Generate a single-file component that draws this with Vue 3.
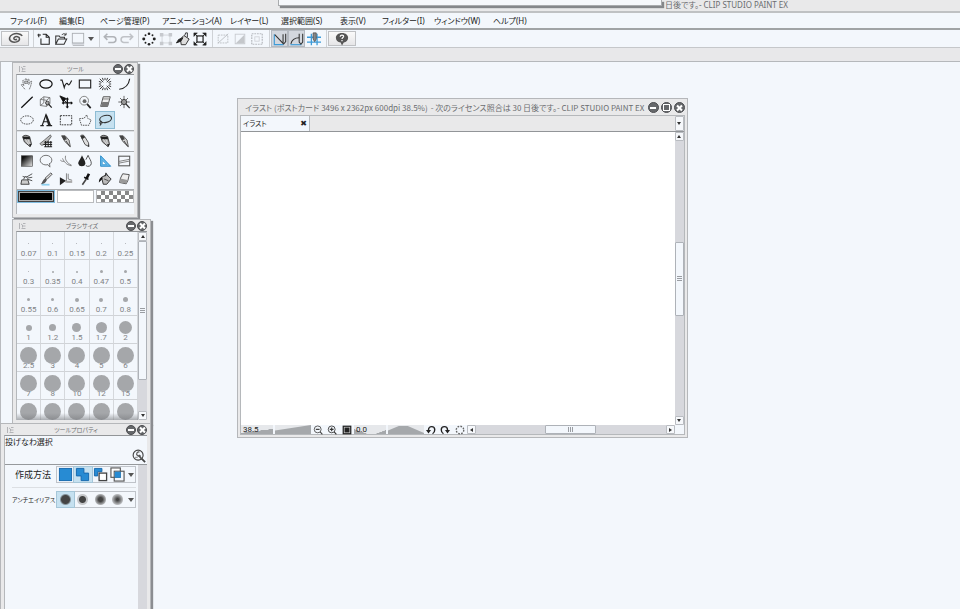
<script setup>
const menus = [
  'ファイル(F)', '編集(E)', 'ページ管理(P)', 'アニメーション(A)', 'レイヤー(L)',
  '選択範囲(S)', '表示(V)', 'フィルター(I)', 'ウィンドウ(W)', 'ヘルプ(H)',
]

const icons = {
  spiral: '<path d="M9.500 8.800c-2 1.200-4.300-.3-2.800-1.900 1.800-1.700 5.800-1 5.600 1.700-.2 3-5.300 4.200-8.600 2.600C.3 9.500 1.200 5.300 5 3.600c3.600-1.500 8.300-1 10.200 1.600" stroke="#555" stroke-width="1.600"/>',
  newDoc: '<path d="M2 2v4M0.500 3.500h4M6.500 2.500h4l3.500 3.500v8H4.500V7.500M10.500 2.500v3.500h3.500" stroke="#222" stroke-width="1.200"/>',
  open: '<path d="M2 14V4.500h4l1 1.500h5v2M2 14h9.500l3-6H5z" stroke="#333" stroke-width="1.200"/><path d="M9 3.500c1-2 3-2 4.500-.5M13.800 1v2.500h-2.500" stroke="#333"/>',
  save: '<rect x="1.500" y="1.500" width="13" height="11" stroke="#a9acb1"/><path d="M1 13.500h14M2 15.500h13" stroke="#bbbec3" stroke-width="1.400"/>',
  undo: '<path d="M1.500 5.500h10a3 3 0 0 1 0 6.500H6M5 2l-3.500 3.500L5 9" stroke="#b0b3b8" stroke-width="1.800"/>',
  redo: '<path d="M14.500 5.500h-10a3 3 0 0 0 0 6.500H10M11 2l3.500 3.500L11 9" stroke="#bfc2c7" stroke-width="1.800"/>',
  burst: '<g fill="#222"><circle cx="8" cy="2" r="1.500"/><circle cx="8" cy="14" r="1.500"/><circle cx="2" cy="8" r="1.700"/><circle cx="14" cy="8" r="1.700"/><circle cx="4" cy="3.800" r="1.100"/><circle cx="12" cy="3.800" r="1.100"/><circle cx="4" cy="12.200" r="1.100"/><circle cx="12" cy="12.200" r="1.100"/></g>',
  frameGrey: '<rect x="3.500" y="3.500" width="9" height="9" stroke="#cfd2d7"/><g fill="#c6c9ce"><path d="M1 1h4v4H1zM11 1h4v4h-4zM1 11h4v4H1zM11 11h4v4h-4z"/></g>',
  fill: '<path d="M5 8l4-4 6 4-4 6.500H6z" fill="#ddd" stroke="#222"/><path d="M10 4l1-3 2 0 0 5" stroke="#222"/><path d="M8 6.500l-5 2-2.500 4 5-2z" fill="#222" stroke="#222"/>',
  frame: '<rect x="4.500" y="4.500" width="7" height="7" stroke="#222" stroke-width="1.400"/><path d="M5 5L1.500 1.500M11 5l3.500-3.500M5 11l-3.500 3.500M11 11l3.500 3.500" stroke="#222"/><path d="M1 1h4L1 5zM15 1h-4l4 4zM1 15h4l-4-4zM15 15h-4l4-4z" fill="#222" stroke="#222" stroke-width=".6"/>',
  deselect: '<rect x="2.500" y="3.500" width="11" height="9" stroke="#b8bbc0" stroke-dasharray="2 1"/><path d="M2 13L14 2" stroke="#b8bbc0"/>',
  invert: '<rect x="2.500" y="2.500" width="11" height="11" stroke="#c6c9ce"/><path d="M3 13L13 3v10z" fill="#c4c7cb"/>',
  border: '<rect x="2" y="2" width="12" height="12" stroke="#b8bbc0" stroke-width="1.400" stroke-dasharray="2 1"/><rect x="5.500" y="5.500" width="5" height="5" stroke="#d0d3d8"/>',
  snapA: '<path d="M1.500 2.500v12H12" stroke="#3d9bd8" stroke-width="1.300"/><path d="M2 3l9.500 10V2.500M14.500 2v9l-2.500 3" stroke="#333" stroke-width="1.200"/>',
  snapB: '<path d="M.5 14.500H13" stroke="#3d9bd8" stroke-width="1.300"/><path d="M1 13.500C2 9 5 6.500 10.500 6.500" stroke="#333" stroke-width="1.200"/><path d="M10.500 2v9.500l2 2.500 2-2.500V2" stroke="#333" stroke-width="1.200"/>',
  snapC: '<path d="M5 2v13M11.500 2v13M0 6h16M0 11.500h16" stroke="#3d9bd8" stroke-width="1.500"/><path d="M7 1h3.500v7l-1.700 3L7 8z" fill="#888" stroke="#555"/>',
  help: '<path d="M8 1c4.500 0 7 2.500 7 5.500s-2.200 5-5 5.500l-2 3.500L6.500 12C3 11.500 1 9.500 1 6.500S3.500 1 8 1z" fill="#555"/><path d="M6 5.300c0-2.500 4.200-2.300 3.800 0-.2 1-1.800 1.200-1.800 2.700M8 9v1.500" stroke="#fff" stroke-width="1.400"/>',
  hand: '<path d="M5.500 14c-1-2-3-3-4-5 0-1 1.500-1 3 1L3 4.500c0-1 1.200-1 1.500 0L6 8 6 2.500c0-1 1.400-1 1.500 0L8 8l1-5c.2-1 1.400-.8 1.300.2L10 8.500l2-3.500c.600-.8 1.700-.2 1.300.700L12 11l-1.500 3.500" stroke="#555" stroke-dasharray="2 .6" stroke-width=".9"/>',
  ellipse: '<ellipse cx="8" cy="8" rx="7" ry="4.700" stroke="#111" stroke-width="1.400"/>',
  polyline: '<path d="M1.500 3.500h2L6 12c1-4 3-6 4-4s2 1 4.500-4" stroke="#222" stroke-width="1.300"/>',
  rect: '<rect x="1.500" y="3.500" width="13" height="9" stroke="#222" stroke-width="1.300"/>',
  rays: '<path d="M2 2l4 4M14 2l-4 4M2 14l4-4M14 14l-4-4M8 1v2.500M8 12.500V15M1 8h2.500M12.500 8H15M5 1l1.200 3M11 1L9.800 4M5 15l1.200-3M11 15l-1.200-3M1 5l3 1.200M1 11l3-1.200M15 5l-3 1.200M15 11l-3-1.200" stroke="#222" stroke-width="1"/>',
  curve: '<path d="M14.500 2c-1 7-4 11-12 12" stroke="#222" stroke-width="1.300"/>',
  line: '<path d="M1.500 14.500L14.500 2" stroke="#111" stroke-width="1.400"/>',
  cube: '<path d="M1.500 5l4-3 7 1v7l-4 3-7-1zM1.500 5l7 1 4-3M8.500 6v7M1.500 12l4-3V2" stroke="#666" stroke-width=".9"/><circle cx="9.500" cy="9" r="2" fill="#aaa" stroke="#333"/><path d="M11 10.500l3.500 4" stroke="#222" stroke-width="1.500"/>',
  move: '<path d="M1 1l7 3-3 4zM5 5l4 4" fill="#111" stroke="#111"/><path d="M9.500 4v10M4.500 9h10" stroke="#111" stroke-width="1.500"/><path d="M9.500 2.500L7.500 5h4zM9.500 15.500l-2-2.500h4zM3 9l2.500-2v4zM16 9l-2.500-2v4z" fill="#111"/>',
  zoom: '<circle cx="7" cy="6.500" r="5" stroke="#777"/><circle cx="7.500" cy="7" r="2.200" fill="#666"/><path d="M10.500 10.500l4 4.500" stroke="#222" stroke-width="2"/>',
  eraser: '<path d="M6 2h8l-3 11H3z" fill="#eee" stroke="#444"/><path d="M5 8h7.500L11 13H3.500z" fill="#777"/><path d="M5.500 4.500h7" stroke="#777"/>',
  star: '<path d="M8 1v14M1.500 8h13M3.500 3.500l9 9M12.500 3.500l-9 9" stroke="#555"/><circle cx="8" cy="8" r="3" fill="#999" stroke="#333"/><path d="M10 10l4.500 5" stroke="#333" stroke-width="1.400"/>',
  marqueeEllipse: '<ellipse cx="8" cy="8" rx="7.200" ry="4.700" stroke="#333" stroke-dasharray="1.800 1"/>',
  text: '<path d="M1.500 14.500h4M8.500 14.500h6.500M3.500 14.500L8 2 12.500 14.500M5 10h6" stroke="#222" stroke-width="1.300"/><path d="M7 2h2l5 12.500h-3.500z" fill="#222"/>',
  marqueeRect: '<rect x="1.500" y="3" width="13" height="10.500" stroke="#222" stroke-dasharray="2 1"/>',
  marqueePoly: '<path d="M1.500 6.500l5.500-.5 3-4 1 4 4 2-2.500 6H4z" stroke="#444" stroke-dasharray="1.800 1"/>',
  lasso: '<ellipse cx="8.700" cy="6.800" rx="6.800" ry="4" transform="rotate(-12 8.700 6.800)" stroke="#333" stroke-width="1.300"/><path d="M4 9.500c-3 0-2.500 3.500 0 3 1.500-.5.500-3-.5-2.500l-1 4.500" stroke="#333" stroke-width="1.100"/>',
  pencil: '<path d="M3 3c2-2 5-2 8 0l2 8-1.500 3.500L5 9z" fill="#aaa" stroke="#333"/><path d="M3 3l8 0 .5 3L4 6zM10 12l3.500-1-1.500 3.500z" fill="#222"/><path d="M6 6l4 6M9 6l2 5" stroke="#eee" stroke-width=".8"/>',
  brushGrid: '<path d="M13 1L6 7l-5 4 2 2 5-2 6-8z" fill="#bbb" stroke="#444" stroke-width=".8"/><path d="M6 9.500h9M5 12h10M6 14.500h9M7.500 8v7M10.500 8v7M13.500 8v7" stroke="#222" stroke-width="1.200"/>',
  pen: '<path d="M3 2l4 0 4.500 5 1.500 7.500L7 9z" fill="#ccc" stroke="#555"/><path d="M3 2l4 .3L9 6 5.500 7z" fill="#444"/><path d="M8 8l4.500 6.500" stroke="#333"/>',
  thinPencil: '<path d="M3 2c1-1 3-1 4 0l5 8 .5 4.500L8 12z" fill="#ddd" stroke="#444"/><path d="M3 2l3-.5L8 4 4.500 6zM11 13l1.500-1.500 0 3z" fill="#333"/>',
  gradient: '<rect x="1.500" y="2" width="13" height="12" fill="url(#toolGradient)" stroke="#444" stroke-width=".7"/>',
  balloon: '<ellipse cx="8" cy="7" rx="6.700" ry="5.500" stroke="#666"/><path d="M10 12l2.500 3-.5-4.500" fill="#f3f7fc" stroke="#666"/>',
  flow: '<path d="M4 5c2 4 4 7 10 8.500M7.500 2c-1 4 1 8 7 11M1.500 7c1 1 2 1.500 4 1.500" stroke="#777"/>',
  drops: '<path d="M4.500 1.500c2 4 4 6.500 4 9.500a4.200 3.700 0 0 1-8.200 0C.3 8 3 6 4.500 1.500z" fill="#222"/><path d="M11.500 1.500c1.500 4 3.700 6 3.700 9.300a3.700 3.500 0 0 1-6.200 2.400M11.500 1.500L9 6.500" stroke="#444"/>',
  setSquare: '<path d="M3 2v12h11.500z" fill="#65b9ea" stroke="#1b84c4"/><path d="M5 7.500v4.500h4.500z" fill="#fff" stroke="#1b84c4" stroke-width=".6"/>',
  frames: '<rect x="2" y="2.500" width="12.500" height="11" stroke="#555" stroke-width="1.200"/><path d="M2 8.500l12.500-2.500M2 10.500l12.500-2.500" stroke="#777"/>',
  airbrush: '<path d="M2 9h7l1.500 5H1z" fill="#ccc" stroke="#333"/><path d="M4 8.500L6 5l2 1M7 6l7-4M8 7l6-1M8 8l6 2M3 5l3 1" stroke="#444"/>',
  brush: '<path d="M13.500 1l1.500 1.500-6 6-2-1.500z" fill="#ddd" stroke="#444"/><path d="M7 7l2 2c-1 3-4 5-7 5 2-2 2-5 5-7z" fill="#555"/><path d="M3 14.500h9" stroke="#8dd0ef" stroke-width="2"/>',
  ink: '<path d="M1 6l7 4-7 5z" fill="#222"/><path d="M8.500 1.500v10h6.500M10.500 2v6l4.500 1.500" stroke="#777"/><path d="M7 10h8v2H7z" fill="#aaa"/>',
  dropper: '<path d="M12.500 2L9.500 8" stroke="#111" stroke-width="3"/><path d="M7 6l5 2.500" stroke="#111" stroke-width="1.600"/><path d="M9.500 8L5 14.500" stroke="#444" stroke-width="1.800"/>',
  bucket: '<path d="M4 6l6-3 5 5-5 6H6z" fill="#bbb" stroke="#222"/><path d="M8 5l1-4 2 3" stroke="#222"/><path d="M5 6c-3 0-4 3-4 6l4-4z" fill="#111"/><path d="M7 8l5 2" stroke="#444"/>',
  scrubber: '<path d="M6.500 2l7.500 1-1.500 6.500-2 4L3 12l1-5z" fill="#eee" stroke="#444"/><path d="M4 7.500l8 1.500-1.500 4L3.500 12z" fill="#999"/>',
  magnifier: '<circle cx="7" cy="7" r="5.700" stroke="#444" stroke-width="1.300"/><path d="M11 11l4 4" stroke="#444" stroke-width="2"/><path d="M8.500 3.500a2.300 2.300 0 1 0 1 3.500" stroke="#555" stroke-width="1.400"/><path d="M7.500 7l4 5" stroke="#555" stroke-width="2"/><path d="M3.500 9.500h3" stroke="#777"/>',
  selNew: '<rect x="1.500" y="1.500" width="13" height="13" fill="#278bd3" stroke="#1468ad"/>',
  selAdd: '<path d="M1.500 1.500h8v5h5v8h-8v-5h-5z" fill="#278bd3" stroke="#1468ad"/>',
  selSub: '<path d="M1.500 1.500h8v3.500h-4.500v4.500h-3.500z" fill="#278bd3" stroke="#1468ad"/><rect x="6.500" y="6.500" width="8" height="8" fill="#fff" stroke="#444" stroke-width="1.400"/>',
  selAnd: '<rect x="1" y="1" width="10" height="10" fill="#fff" stroke="#555" stroke-width="1.200"/><rect x="4.500" y="4.500" width="10.500" height="10.500" stroke="#555" stroke-width="1.200"/><rect x="5" y="5" width="6.500" height="6.500" fill="#278bd3"/>',
  zoomOut: '<circle cx="7.500" cy="7" r="5.500" stroke="#555" stroke-width="1.500"/><path d="M4.500 7h6M11.500 11l3.500 4" stroke="#444" stroke-width="1.800"/>',
  zoomIn: '<circle cx="7.500" cy="7" r="5.500" stroke="#444" stroke-width="1.500"/><path d="M4.500 7h6M7.500 4v6M11.500 11l3.500 4" stroke="#333" stroke-width="1.800"/>',
  fit: '<rect x="1" y="1" width="14" height="14" fill="#222"/><rect x="3.500" y="3.500" width="9" height="9" stroke="#ddd"/>',
  rotateLeft: '<path d="M4 10V7.500a5 5 0 0 1 10 0c0 3-1 5-3.500 6.500" stroke="#222" stroke-width="2.200"/><path d="M0 8h8l-4 5.500z" fill="#222"/>',
  rotateRight: '<path d="M12 10V7.500a5 5 0 0 0-10 0c0 3 1 5 3.500 6.500" stroke="#222" stroke-width="2.200"/><path d="M8 8h8l-4 5.500z" fill="#222"/>',
  reset: '<circle cx="8" cy="8" r="6" stroke="#666" stroke-width="2.200" stroke-dasharray="2.700 2"/>',
  list: '<path d="M3 2v12M6 4l3 2v5M10 3h5M10 8h5M7 13h8" stroke="#a0a2a6" stroke-width="1.500"/>',
}

const toolbar = [
  [['newDoc', '新規'], ['open', '開く'], ['save', '保存'], ['caret', '保存メニュー']],
  [['undo', '取り消し'], ['redo', 'やり直し']],
  [['burst', '消去'], ['frameGrey', '選択範囲外を消去'], ['fill', '塗りつぶし'], ['frame', '拡大・縮小・回転']],
  [['deselect', '選択を解除'], ['invert', '選択範囲を反転'], ['border', '境界線']],
  [['snapA', '定規にスナップ', true], ['snapB', '特殊定規にスナップ', true], ['snapC', 'グリッドにスナップ']],
]

const toolSections = [
  ['hand', 'ellipse', 'polyline', 'rect', 'rays', 'curve', 'line', 'cube', 'move', 'zoom', 'eraser', 'star',
    'marqueeEllipse', 'text', 'marqueeRect', 'marqueePoly', 'lasso'],
  ['pencil', 'brushGrid', 'pen', 'thinPencil', 'pencil', 'pen'],
  ['gradient', 'balloon', 'flow', 'drops', 'setSquare', 'frames', 'airbrush', 'brush', 'ink', 'dropper', 'bucket', 'scrubber'],
]

const brushes = [
  ['0.07', 1], ['0.1', 1], ['0.15', 1], ['0.2', 1], ['0.25', 1],
  ['0.3', 1], ['0.35', 2], ['0.4', 2], ['0.47', 3], ['0.5', 3],
  ['0.55', 3], ['0.6', 3], ['0.65', 4], ['0.7', 4], ['0.8', 5],
  ['1', 6], ['1.2', 7], ['1.5', 9], ['1.7', 11], ['2', 13],
  ['2.5', 17], ['3', 17], ['4', 17], ['5', 17], ['6', 17],
  ['7', 17], ['8', 17], ['10', 17], ['12', 17], ['15', 17],
  ['', 17], ['', 17], ['', 17], ['', 17], ['', 17],
]

const methods = [['selNew', '新規選択'], ['selAdd', '追加選択'], ['selSub', '部分解除'], ['selAnd', '選択中を選択']]
const smoothing = ['無し', '弱', '中', '強']
</script>

<template>
  <div class="app">
    <svg class="defs" aria-hidden="true">
      <defs>
        <linearGradient id="toolGradient" x1="0" y1="0" x2="1" y2="1">
          <stop offset="0.2" stop-color="#111" />
          <stop offset="1" stop-color="#eee" />
        </linearGradient>
      </defs>
    </svg>

    <header class="titlebar">日後です。- CLIP STUDIO PAINT EX</header>
    <div class="popup"></div>

    <nav class="menubar">
      <button v-for="m in menus" :key="m" type="button">{{ m }}</button>
    </nav>

    <div class="toolbar">
      <button class="raised" type="button" aria-label="CLIP STUDIO">
        <svg class="i15" viewBox="0 0 16 16" v-html="icons.spiral" />
      </button>
      <div v-for="(g, gi) in toolbar" :key="gi" class="group">
        <button
          v-for="[icon, label, on] in g" :key="icon" type="button"
          :class="{ on, narrow: icon === 'caret' }" :aria-label="label"
        >
          <span v-if="icon === 'caret'" class="caret"></span>
          <svg v-else class="i14" viewBox="0 0 16 16" v-html="icons[icon]" />
        </button>
      </div>
      <div class="group last">
        <button class="raised" type="button" aria-label="ヘルプ">
          <svg class="i14" viewBox="0 0 16 16" v-html="icons.help" />
        </button>
      </div>
    </div>
    <div class="band"></div>

    <main class="desk">
      <section class="panel tools">
        <header class="head">
          <svg class="i8" viewBox="0 0 16 16" v-html="icons.list" />
          <h2>ツール</h2>
          <button class="round min" type="button" aria-label="最小化"></button>
          <button class="round close" type="button" aria-label="閉じる"></button>
        </header>
        <div class="well">
          <div v-for="(s, si) in toolSections" :key="si" class="toolgrid">
            <button
              v-for="(t, ti) in s" :key="ti" type="button" :aria-label="t"
              :class="{ selected: t === 'lasso' }"
            >
              <svg class="i14" viewBox="0 0 16 16" v-html="icons[t]" />
            </button>
          </div>
          <div class="swatches">
            <button class="main" type="button" aria-label="メインカラー"></button>
            <button class="sub" type="button" aria-label="サブカラー"></button>
            <button class="clear" type="button" aria-label="透明色"></button>
          </div>
        </div>
      </section>

      <section class="panel sizes">
        <header class="head">
          <svg class="i8" viewBox="0 0 16 16" v-html="icons.list" />
          <h2>ブラシサイズ</h2>
          <button class="round min" type="button" aria-label="最小化"></button>
          <button class="round close" type="button" aria-label="閉じる"></button>
        </header>
        <div class="well sizewell">
          <div class="sizegrid">
            <button v-for="([label, d], i) in brushes" :key="i" type="button">
              <span class="dotbox"><span class="dot" :style="{ width: d + 'px', height: d + 'px' }"></span></span>
              <span v-if="label" class="num">{{ label }}</span>
            </button>
          </div>
          <div class="vbar">
            <button class="arrow up" type="button" aria-label="上へ"></button>
            <div class="thumb"><i></i></div>
            <div class="rest"></div>
            <button class="arrow down" type="button" aria-label="下へ"></button>
          </div>
        </div>
      </section>

      <section class="panel props">
        <header class="head">
          <svg class="i8" viewBox="0 0 16 16" v-html="icons.list" />
          <h2>ツールプロパティ</h2>
          <button class="round min" type="button" aria-label="最小化"></button>
          <button class="round close" type="button" aria-label="閉じる"></button>
        </header>
        <div class="well propwell">
          <div class="subtool">
            <span>投げなわ選択</span>
            <button type="button" aria-label="サブツール詳細">
              <svg class="i14" viewBox="0 0 16 16" v-html="icons.magnifier" />
            </button>
          </div>
          <div class="propbody">
            <div class="rows">
              <div class="row">
                <span id="method" class="name">作成方法</span>
                <div class="choice" role="group" aria-labelledby="method">
                  <button
                    v-for="([icon, label], i) in methods" :key="icon" type="button"
                    :aria-label="label" :class="{ picked: i === 1 }"
                  >
                    <svg class="i15" viewBox="0 0 16 16" v-html="icons[icon]" />
                  </button>
                  <button class="drop" type="button" aria-label="作成方法の一覧"><span class="caret"></span></button>
                </div>
              </div>
              <div class="row">
                <span id="aa" class="long">アンチエイリアス</span>
                <div class="choice" role="group" aria-labelledby="aa">
                  <button
                    v-for="(label, i) in smoothing" :key="label" type="button"
                    :aria-label="label" :class="{ picked: i === 0 }"
                  >
                    <span class="soft" :class="'s' + i"></span>
                  </button>
                  <button class="drop" type="button" aria-label="アンチエイリアスの一覧"><span class="caret"></span></button>
                </div>
              </div>
            </div>
            <div class="gutter"></div>
          </div>
        </div>
      </section>

      <section class="doc">
        <header class="dochead">
          <h1>イラスト (ポストカード 3496 x 2362px 600dpi 38.5%)<span>- 次のライセンス照合は 30 日後です。- CLIP STUDIO PAINT EX</span></h1>
          <button class="round min" type="button" aria-label="最小化"></button>
          <button class="round max" type="button" aria-label="最大化"></button>
          <button class="round close" type="button" aria-label="閉じる"></button>
        </header>
        <div class="docbody">
          <div class="tabs">
            <div class="tab">
              <span>イラスト</span>
              <button type="button" aria-label="タブを閉じる">✖</button>
            </div>
            <button class="arrow down tabmenu" type="button" aria-label="タブ一覧"></button>
          </div>
          <div class="view">
            <div class="canvas"></div>
            <div class="vbar">
              <button class="arrow up" type="button" aria-label="上へ"></button>
              <div class="rest"></div>
              <div class="thumb"><i></i></div>
              <div class="rest"></div>
              <button class="arrow down" type="button" aria-label="下へ"></button>
            </div>
          </div>
          <div class="status">
            <input class="field ramp-a" type="text" value="38.5" aria-label="表示倍率">
            <button class="slope ramp-b" type="button" aria-label="倍率を調整"><span></span></button>
            <div class="sicons">
              <button type="button" aria-label="縮小"><svg class="i10" viewBox="0 0 16 16" v-html="icons.zoomOut" /></button>
              <button type="button" aria-label="拡大"><svg class="i10" viewBox="0 0 16 16" v-html="icons.zoomIn" /></button>
              <button type="button" aria-label="全体表示"><svg class="i10" viewBox="0 0 16 16" v-html="icons.fit" /></button>
            </div>
            <input class="field ramp-c" type="text" value="0.0" aria-label="回転角度">
            <button class="slope ramp-d" type="button" aria-label="角度を調整"><span></span></button>
            <div class="sicons">
              <button type="button" aria-label="左回転"><svg class="i10" viewBox="0 0 16 16" v-html="icons.rotateLeft" /></button>
              <button type="button" aria-label="右回転"><svg class="i10" viewBox="0 0 16 16" v-html="icons.rotateRight" /></button>
              <button type="button" aria-label="回転をリセット"><svg class="i10" viewBox="0 0 16 16" v-html="icons.reset" /></button>
            </div>
            <div class="hbar">
              <button class="arrow left" type="button" aria-label="左へ"></button>
              <div class="rest before"></div>
              <div class="thumb"><i></i></div>
              <div class="rest after"></div>
              <button class="arrow right" type="button" aria-label="右へ"></button>
            </div>
            <div class="corner"></div>
          </div>
        </div>
      </section>
    </main>
  </div>
</template>

<style>
body {
  background: #f3f7fc;
  overflow: hidden;
}
</style>

<style scoped>
* {
  box-sizing: border-box;
}
.app {
  position: relative;
  display: flex;
  flex-direction: column;
  min-height: 100vh;
  overflow: hidden;
  background: #f3f7fc;
  font-family: "Noto Sans", "Noto Sans CJK JP", sans-serif;
  font-feature-settings: "palt";
  font-size: 8px;
  line-height: 12px;
  color: #222;
}
.defs {
  position: absolute;
  width: 0;
  height: 0;
}
button, input {
  margin: 0;
  padding: 0;
  border: 0;
  border-radius: 0;
  background: none;
  color: inherit;
  font: inherit;
  font-feature-settings: inherit;
}
button {
  display: flex;
  align-items: center;
  justify-content: center;
}
svg {
  display: block;
  flex: none;
  fill: none;
}
.i8 { width: 8px; height: 8px; }
.i10 { width: 10px; height: 10px; }
.i14 { width: 14px; height: 14px; }
.i15 { width: 15px; height: 15px; }

.titlebar {
  height: 13px;
  padding-right: 172px;
  border-bottom: 2px solid #bfc1c3;
  background: #e9e9ea;
  color: #6b6d70;
  text-align: right;
  line-height: 9px;
  white-space: nowrap;
}
.popup {
  position: absolute;
  top: 0;
  left: 278px;
  width: 384px;
  height: 6px;
  border: 1px solid #a9abad;
  border-top: 0;
  background: #f6f8fb;
  box-shadow: 2px 2px 1px #85878a;
}
.menubar {
  display: grid;
  grid-template-columns: 49px 41px 62px 68px 51px 59px 42px 52px 59px auto;
  justify-content: start;
  height: 17px;
  padding-left: 10px;
  border-bottom: 2px solid #a0a3a5;
}
.menubar button {
  justify-content: start;
  white-space: nowrap;
}
.toolbar {
  display: flex;
  align-items: center;
  height: 17px;
  padding-left: 1px;
}
.raised {
  width: 28px;
  height: 15px;
  border: 1px solid #bfc1c4;
  background: linear-gradient(#fafafa, #e6e6e8);
}
.group {
  display: flex;
  align-items: center;
  height: 17px;
  margin-left: 4px;
  padding-left: 1px;
  border-left: 1px solid #cfd2d6;
}
.group:nth-child(3), .group:nth-child(4) {
  margin-left: 3px;
}
.group button:not(.raised) {
  width: 17px;
  height: 17px;
}
.group .narrow:not(.raised) {
  width: 10px;
}
.group .on {
  border: 1px solid #b4b9c0;
  background: #d3d7de;
}
.caret {
  width: 0;
  border: 3px solid transparent;
  border-top: 4px solid #555;
  border-bottom: 0;
}
.band {
  height: 15px;
  border-top: 1px solid #c5c7ca;
  border-bottom: 1px solid #b5b8bb;
  background: #e8e8ea;
}
.desk {
  position: relative;
  flex: 1;
  border-left: 1px solid #b9bbbf;
}
.panel {
  position: absolute;
  display: flex;
  flex-direction: column;
  padding: 0 3px 3px;
  border: 1px solid #b5b7ba;
  background: #e9e9ea;
  box-shadow: 2px 2px 1px #8b8d91;
}
.tools {
  top: 0;
  left: 11px;
  width: 126px;
  height: 156px;
}
.sizes {
  top: 157px;
  left: 11px;
  width: 139px;
  height: 205px;
}
.props {
  top: 361px;
  bottom: -4px;
  left: -1px;
  width: 151px;
}
.head {
  display: flex;
  flex: none;
  align-items: center;
  gap: 1px;
  height: 11px;
  padding-left: 2px;
}
h2, h1 {
  flex: 1;
  margin: 0;
  font-weight: 400;
  white-space: nowrap;
}
h2 {
  padding-left: 12px;
  color: #6b6d70;
  font-size: 6px;
  line-height: 10px;
  text-align: center;
}
.round {
  position: relative;
  flex: none;
  width: 10px;
  height: 10px;
  border: 1px solid #4c4d50;
  border-radius: 50%;
  background: #66686b;
}
.round.min::before {
  content: "";
  width: 6px;
  height: 2px;
  background: #fff;
}
.round.max::before {
  content: "";
  width: 5px;
  height: 5px;
  border: 1px solid #fff;
}
.round.close::before, .round.close::after {
  content: "";
  width: 7px;
  height: 2px;
  background: #fff;
  transform: rotate(45deg);
}
.round.close::after {
  position: absolute;
  transform: rotate(-45deg);
}
.well {
  flex: 1;
  min-height: 0;
  border-top: 1px solid #929598;
  border-left: 1px solid #b5b8bb;
  background: #f3f7fc;
}
.toolgrid {
  display: grid;
  grid-template-columns: repeat(6, 1fr);
  grid-auto-rows: 18px;
  padding-bottom: 1px;
  border-bottom: 1px solid #a9acaf;
}
.toolgrid:nth-child(2) {
  border-top: 1px solid #dde0e4;
}
.toolgrid .selected {
  border: 1px solid #8dbcd4;
  background: #c6e1f0;
}
.swatches {
  display: grid;
  grid-template-columns: 1fr 1fr 1fr;
  gap: 2px;
}
.swatches button {
  height: 13px;
  border: 1px solid #b9bbbe;
}
.swatches .main {
  border: 1px solid #7fbce0;
  background: #000;
  box-shadow: inset 0 0 0 1px #444, inset 0 0 0 2px #aaa;
}
.swatches .sub {
  background: #fff;
}
.swatches .clear {
  background: repeating-conic-gradient(#888 0 25%, #fff 0 50%) 0 0 / 8px 8px;
}
.sizewell {
  display: flex;
}
.sizegrid {
  position: relative;
  display: grid;
  flex: 1;
  grid-template-columns: repeat(5, 1fr);
  grid-auto-rows: 28px;
  overflow: hidden;
}
.sizegrid::after {
  content: "";
  position: absolute;
  right: 0;
  bottom: 0;
  left: 0;
  height: 7px;
  background: linear-gradient(transparent, rgb(120 122 126 / 60%));
}
.sizegrid button {
  flex-direction: column;
  justify-content: start;
  overflow: hidden;
  padding-top: 3px;
  border-right: 1px solid #d5d8dc;
  border-bottom: 1px solid #d0d3d7;
}
.dotbox {
  display: flex;
  flex: none;
  align-items: center;
  justify-content: center;
  height: 17px;
}
.dot {
  border-radius: 50%;
  background: #a5a7aa;
}
.num {
  margin-top: -3px;
  color: #808285;
  font-family: Roboto, sans-serif;
  font-size: 8px;
  line-height: 9px;
  text-shadow: 0 0 1px #f3f7fc, 0 0 1px #f3f7fc;
}
.vbar {
  display: flex;
  flex: none;
  flex-direction: column;
  width: 9px;
  background: #d7d8dd;
}
.arrow {
  flex: none;
  width: 9px;
  height: 9px;
  border: 1px solid #b9bcc1;
  border-radius: 1px;
  background: #f6f8fb;
}
.arrow::before {
  content: "";
  border: 2px solid transparent;
}
.arrow.up::before { border-top: 0; border-bottom: 3px solid #333; }
.arrow.down::before { border-bottom: 0; border-top: 3px solid #333; }
.arrow.left::before { border-left: 0; border-right: 3px solid #333; }
.arrow.right::before { border-right: 0; border-left: 3px solid #333; }
.thumb {
  display: flex;
  flex: none;
  align-items: center;
  justify-content: center;
  border: 1px solid #aeb2b8;
  border-radius: 1px;
  background: #f3f7fc;
}
.thumb i {
  width: 5px;
  height: 5px;
  background: repeating-linear-gradient(#9a9da2 0 1px, transparent 1px 2px);
}
.sizes .thumb {
  flex: 138;
}
.sizes .rest {
  flex: 31;
}
.propwell {
  display: flex;
  flex-direction: column;
}
.subtool {
  display: flex;
  flex: none;
  justify-content: space-between;
  height: 29px;
  border-bottom: 1px solid #96999c;
  line-height: 11px;
}
.subtool button {
  align-self: end;
  width: 17px;
  height: 16px;
}
.propbody {
  display: flex;
  flex: 1;
}
.rows {
  flex: 1;
  min-width: 0;
  padding: 1px 2px 0 7px;
}
.gutter {
  flex: none;
  width: 9px;
  background: #d7d8dd;
}
.row {
  display: flex;
  align-items: center;
  justify-content: space-between;
  white-space: nowrap;
}
.row + .row {
  margin-top: 4px;
  padding-top: 3px;
  border-top: 1px solid #dcdfe3;
}
.row .name {
  padding-left: 3px;
  font-size: 9px;
}
.row .long {
  font-size: 6px;
}
.choice {
  display: flex;
  flex: none;
  width: 80px;
  height: 17px;
  border: 1px solid #bfc3c9;
}
.choice button {
  flex: 1;
}
.choice .drop {
  flex: none;
  width: 9px;
}
.choice .picked {
  background: #c6e1f0;
  box-shadow: 0 0 0 1px #a5c6d8;
}
.soft {
  width: 13px;
  height: 13px;
  border-radius: 50%;
}
.s0 { background: radial-gradient(circle, #444 0 4px, transparent 6px); }
.s1 { background: radial-gradient(circle, #444 0 3px, #c5c7ca 4px 5px, transparent 6px); }
.s2 { background: radial-gradient(circle, #444 0 2px, #aaacae 5px, transparent 6px); }
.s3 { background: radial-gradient(circle, #444 0 1px, #b5b7ba 5px, transparent 6px); }

.doc {
  position: absolute;
  top: 36px;
  bottom: 171px;
  left: 236px;
  display: flex;
  flex-direction: column;
  width: 47%;
  min-height: 120px;
  padding: 0 2px 2px;
  border: 1px solid #b5b7ba;
  background: #e9e9ea;
}
.dochead {
  display: flex;
  flex: none;
  align-items: center;
  gap: 2px;
  height: 16px;
  padding: 1px 0 0 5px;
}
h1 {
  color: #6b6d70;
  font-family: "Noto Sans CJK JP", sans-serif;
  font-size: 8px;
  line-height: 14px;
}
h1 span {
  margin-left: 3px;
}
.dochead .round {
  width: 11px;
  height: 11px;
}
.docbody {
  display: flex;
  flex: 1;
  flex-direction: column;
  min-height: 0;
  border: 1px solid #b5b8bb;
}
.tabs {
  display: flex;
  flex: none;
  justify-content: space-between;
  height: 16px;
  border-bottom: 1px solid #929598;
}
.tab {
  display: flex;
  align-items: center;
  justify-content: space-between;
  width: 69px;
  padding: 0 2px;
  border-right: 1px solid #b5b8bb;
  background: #f3f7fc;
  font-size: 7px;
}
.tab button {
  font-family: "DejaVu Sans", sans-serif;
  font-size: 8px;
}
.tabmenu {
  height: 15px;
}
.view {
  display: flex;
  flex: 1;
  min-height: 0;
}
.canvas {
  flex: 1;
  background: #fff;
}
.view .thumb {
  height: 74px;
}
.view .rest {
  flex: 1;
}
.status {
  display: flex;
  flex: none;
  height: 9px;
  background: #f3f7fc;
}
.field {
  flex: none;
  width: 32px;
  height: 9px;
  padding-left: 2px;
  font-family: Roboto, sans-serif;
  line-height: 9px;
}
.ramp-a { background: linear-gradient(173deg, #e6e8eb 60%, #a5a8ab 62%); }
.ramp-c { background: linear-gradient(200deg, transparent 75%, #a5a8ab 77%), linear-gradient(160deg, #e6e8eb 80%, #a5a8ab 82%); }
.slope {
  flex: none;
  align-items: stretch;
  width: 36px;
  height: 9px;
  margin-left: 2px;
  background: #e6e8eb;
}
.slope span {
  flex: 1;
  background: #a5a8ab;
}
.ramp-b span { clip-path: polygon(0 60%, 100% 0, 100% 100%, 0 100%); }
.ramp-d span { clip-path: polygon(0 60%, 30% 10%, 55% 10%, 100% 90%, 100% 100%, 0 100%); }
.sicons {
  display: flex;
  flex: none;
  justify-content: space-around;
  width: 43px;
}
.hbar {
  display: flex;
  flex: 1;
  background: #d7d8dd;
}
.hbar .thumb {
  width: 51px;
}
.hbar .thumb i {
  background: repeating-linear-gradient(90deg, #9a9da2 0 1px, transparent 1px 2px);
}
.before, .after {
  flex: 1;
}
.corner {
  width: 9px;
}
</style>
